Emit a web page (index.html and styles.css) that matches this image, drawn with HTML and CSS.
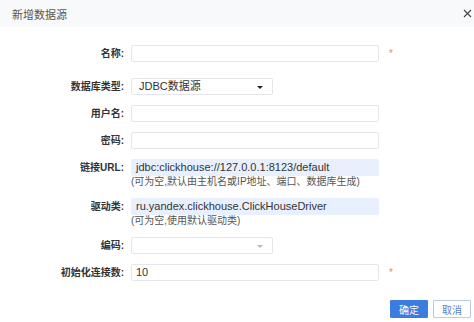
FILE: index.html
```html
<!DOCTYPE html>
<html lang="zh">
<head>
<meta charset="utf-8">
<link rel="stylesheet" href="styles.css">
</head>
<body>
<div class="dialog">
  <div class="header">
    <span class="title">新增数据源</span>
    <svg class="close" width="9" height="9" viewBox="0 0 9 9"><path d="M1 1L8 8M8 1L1 8" stroke="#444" stroke-width="1.1" fill="none"/></svg>
  </div>
  <div class="form">
    <div class="row row-first">
      <label class="label">名称:</label>
      <div class="field"><div class="input"></div></div>
      <span class="star">*</span>
    </div>
    <div class="row row-type">
      <label class="label">数据库类型:</label>
      <div class="field"><div class="select">JDBC数据源<span class="caret dark"></span></div></div>
    </div>
    <div class="row">
      <label class="label">用户名:</label>
      <div class="field"><div class="input"></div></div>
    </div>
    <div class="row">
      <label class="label">密码:</label>
      <div class="field"><div class="input"></div></div>
    </div>
    <div class="row">
      <label class="label">链接URL:</label>
      <div class="field">
        <div class="input filled">jdbc:clickhouse://127.0.0.1:8123/default</div>
        <div class="hint">(可为空,默认由主机名或IP地址、端口、数据库生成)</div>
      </div>
    </div>
    <div class="row">
      <label class="label">驱动类:</label>
      <div class="field">
        <div class="input filled">ru.yandex.clickhouse.ClickHouseDriver</div>
        <div class="hint">(可为空,使用默认驱动类)</div>
      </div>
    </div>
    <div class="row">
      <label class="label">编码:</label>
      <div class="field"><div class="select"><span class="caret light"></span></div></div>
    </div>
    <div class="row">
      <label class="label">初始化连接数:</label>
      <div class="field"><div class="input">10</div></div>
      <span class="star">*</span>
    </div>
  </div>
  <div class="footer">
    <button class="btn primary">确定</button>
    <button class="btn plain">取消</button>
  </div>
</div>
</body>
</html>
```
FILE: styles.css
```css
* { box-sizing: border-box; }
html, body { margin: 0; padding: 0; background: #fff; }
body {
  font-family: "Liberation Sans", "Noto Sans CJK SC", sans-serif;
  font-size: 11px;
  color: #333;
  width: 474px;
  height: 322px;
  overflow: hidden;
}
.header {
  height: 27px;
  background: #f8f9fb;
  display: flex;
  align-items: center;
  justify-content: space-between;
  padding: 0 2px 0 12px;
}
.title { font-size: 11px; color: #555; }
.close { display: block; }
.form {
  display: flex;
  flex-direction: column;
  gap: 10px;
  padding-top: 18px;
}
.row {
  display: flex;
  align-items: flex-start;
}
.row-type { margin-top: 6px; }
.label {
  width: 124px;
  flex: none;
  text-align: right;
  font-weight: bold;
  color: #333;
  line-height: 17px;
  font-size: 10px;
}
.field {
  margin-left: 7px;
  width: 248px;
  flex: none;
}
.input {
  height: 17px;
  border: 1px solid #e4e6eb;
  border-radius: 2px;
  padding: 0 4px;
  line-height: 15px;
  font-size: 11px;
  color: #333;
  background: #fff;
}
.input.filled { background: #e8f0fe; border-color: #e8f0fe; }
.hint {
  font-size: 10px;
  color: #555;
  line-height: 12px;
}
.select {
  position: relative;
  width: 142px;
  height: 17px;
  border: 1px solid #e4e6eb;
  border-radius: 2px;
  padding: 0 7px;
  line-height: 15px;
  font-size: 11px;
  color: #333;
}
.caret {
  position: absolute;
  right: 9px;
  top: 7px;
  width: 0;
  height: 0;
  border-left: 3px solid transparent;
  border-right: 3px solid transparent;
  border-top: 3px solid #222;
}
.caret.light { border-top-color: #bbb; }
.star {
  color: #f08a5d;
  margin-left: 10px;
  font-size: 10px;
  line-height: 17px;
}
.footer {
  display: flex;
  justify-content: flex-end;
  gap: 5px;
  padding: 19px 3px 0 0;
}
.btn {
  width: 38px;
  height: 18px;
  font-family: inherit;
  font-size: 10px;
  border-radius: 1px;
  padding: 0;
  cursor: pointer;
}
.btn.primary { background: #3a7ddf; color: #fff; border: 1px solid #3a7ddf; }
.btn.plain { background: #fff; color: #5a7fbf; border: 1px solid #b9c9e6; }
```
